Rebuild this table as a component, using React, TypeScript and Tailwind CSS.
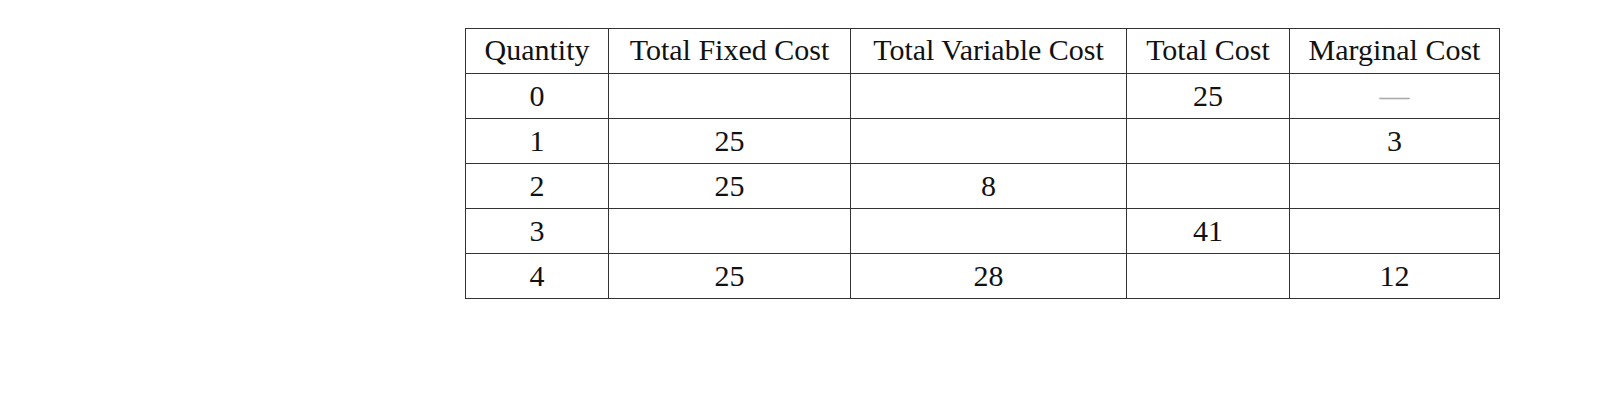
const headers = ["Quantity", "Total Fixed Cost", "Total Variable Cost", "Total Cost", "Marginal Cost"];
const widths = ["w-[143px]", "w-[242px]", "w-[276px]", "w-[163px]", "w-[210px]"];

const rows: string[][] = [
  ["0", "", "", "25", "—"],
  ["1", "25", "", "", "3"],
  ["2", "25", "8", "", ""],
  ["3", "", "", "41", ""],
  ["4", "25", "28", "", "12"],
];

export default function App() {
  return (
    <div className="min-h-screen bg-white pl-[465px] pt-[28px]" style={{ fontFamily: '"Liberation Serif", "Times New Roman", serif' }}>
      <table className="table-fixed border-collapse text-[30px] leading-none text-[#111]">
        <thead>
          <tr>
            {headers.map((h, i) => (
              <th key={h} className={`${widths[i]} h-[45px] border border-[#333] px-0 pb-[2px] text-center font-normal whitespace-nowrap`}>
                {h}
              </th>
            ))}
          </tr>
        </thead>
        <tbody>
          {rows.map((r, ri) => (
            <tr key={ri}>
              {r.map((c, ci) => (
                <td key={ci} className="h-[45px] border border-[#333] text-center">
                  {c === "—" ? <span className="text-[#aaa]">—</span> : c}
                </td>
              ))}
            </tr>
          ))}
        </tbody>
      </table>
    </div>
  );
}
